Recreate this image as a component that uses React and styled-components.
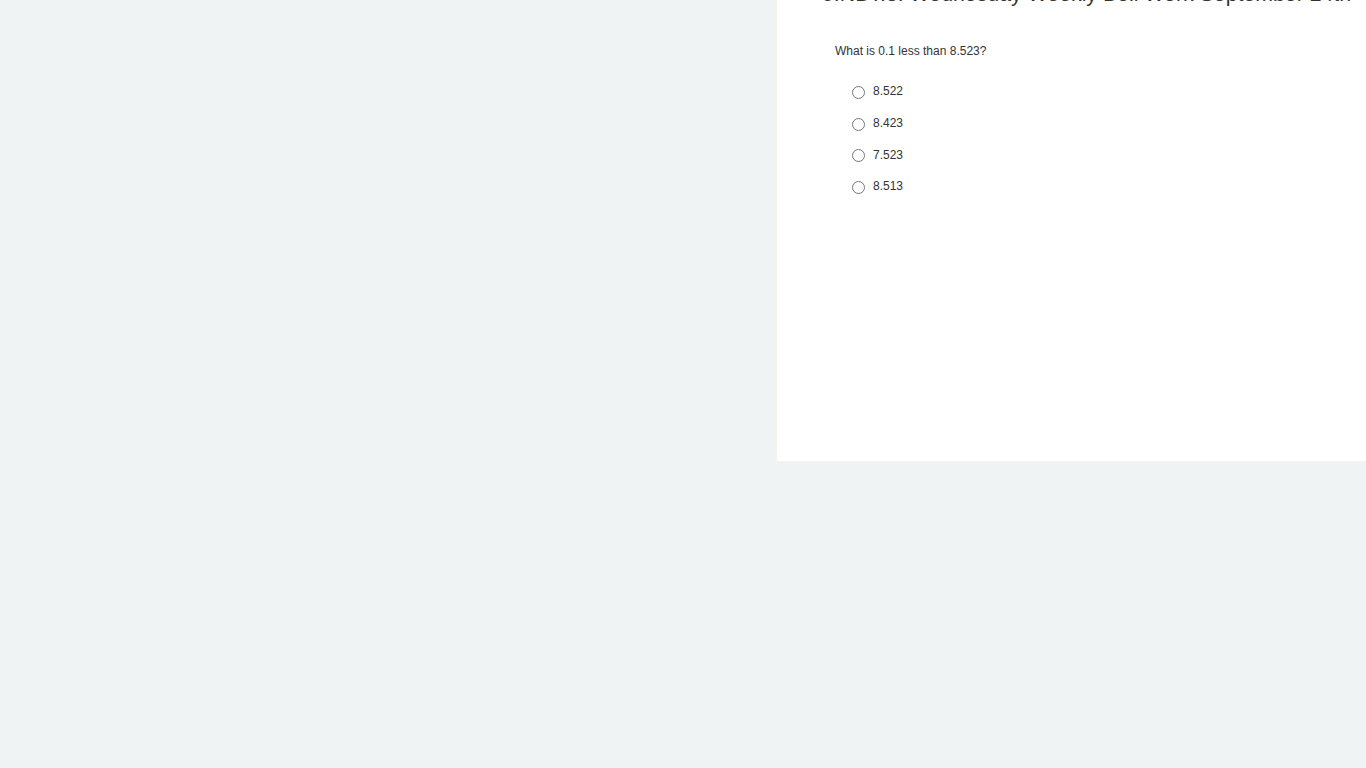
import React from 'react';
import styled, { createGlobalStyle } from 'styled-components';

const GlobalStyle = createGlobalStyle`
  html, body {
    margin: 0;
    padding: 0;
    background: #eff3f4;
    font-family: "Liberation Sans", Arial, sans-serif;
    overflow: hidden;
  }
`;

const Page = styled.div`
  display: flex;
  justify-content: flex-end;
  width: 1366px;
  height: 768px;
  background: #eff3f4;
`;

const Panel = styled.section`
  width: 590px;
  height: 462px;
  background: #fff;
  border-left: 1px solid #f4f4ef;
  border-bottom: 1px solid #f4f4ef;
  overflow: hidden;
  padding-left: 45px;
  box-sizing: border-box;
`;

const Title = styled.h2`
  margin: -18px 0 0;
  font-size: 21.3px;
  font-weight: normal;
  line-height: 24px;
  color: #333;
  white-space: nowrap;
`;

const Question = styled.div`
  margin-top: 38px;
  padding-left: 13px;
`;

const Prompt = styled.p`
  margin: 0 0 17px;
  font-size: 12px;
  line-height: 14px;
  color: #333;
`;

const Options = styled.div`
  display: flex;
  flex-direction: column;
  padding-left: 17px;
`;

const Option = styled.label`
  display: flex;
  align-items: center;
  gap: 8px;
  height: ${p => p.$h || 32}px;
  font-size: 12px;
  color: #333;
  cursor: pointer;

  input {
    margin: 2px 0 0;
    width: 13px;
    height: 13px;
    accent-color: #888;
  }
`;

const answers = [
  { value: '8.522', h: 32 },
  { value: '8.423', h: 32 },
  { value: '7.523', h: 31 },
  { value: '8.513', h: 32 },
];

export default function App() {
  return (
    <>
      <GlobalStyle />
      <Page>
        <Panel>
          <Title>5.NBT.3: Wednesday Weekly Bell Work September 24th</Title>
          <Question>
            <Prompt>What is 0.1 less than 8.523?</Prompt>
            <Options>
              {answers.map(a => (
                <Option key={a.value} $h={a.h}>
                  <input type="radio" name="q1" value={a.value} />
                  <span>{a.value}</span>
                </Option>
              ))}
            </Options>
          </Question>
        </Panel>
      </Page>
    </>
  );
}
